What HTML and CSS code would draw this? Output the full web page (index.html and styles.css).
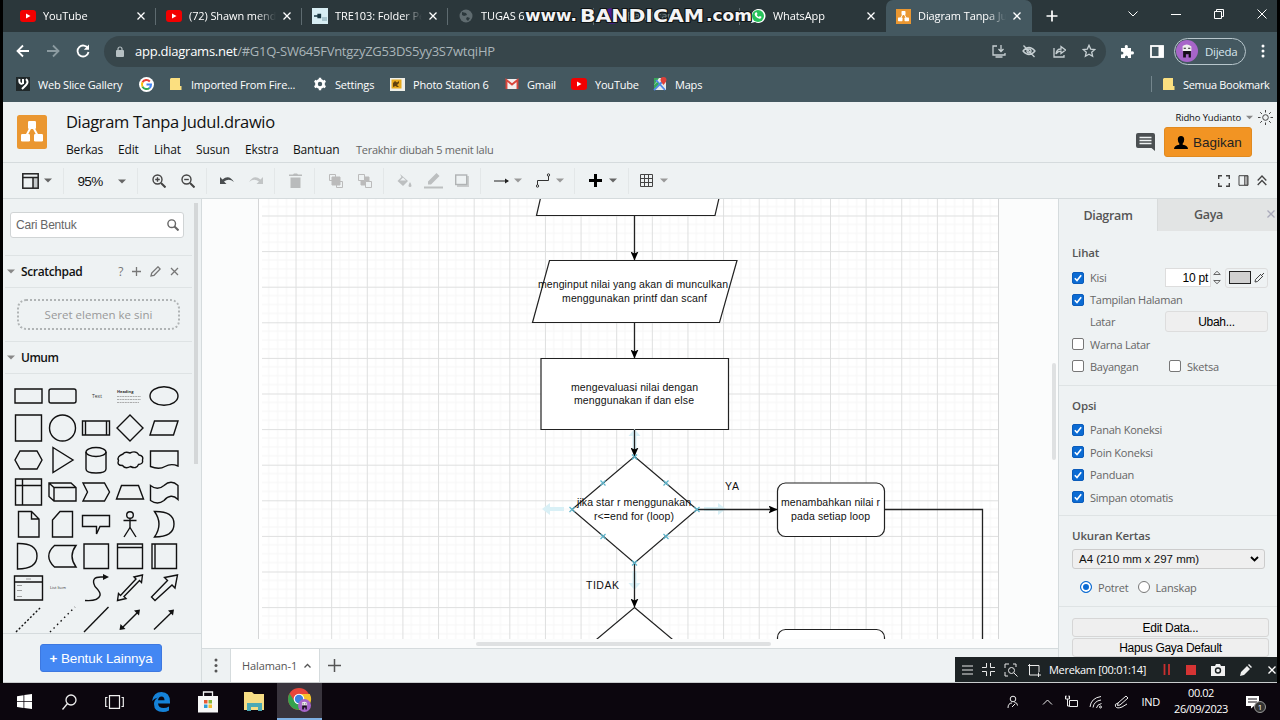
FILE: index.html
```html
<!DOCTYPE html>
<html lang="id">
<head>
    <meta charset="UTF-8">
    <meta name="viewport" content="width=device-width, initial-scale=1.0">
    <title>Diagram Tanpa Judul.drawio</title>
    <link rel="stylesheet" href="styles.css">
</head>
<body>
    <svg class="defs" width="0" height="0">
        <symbol id="close" viewBox="0 0 10 10"><path d="M1.5 1.5l7 7M8.500 1.500l-7 7" fill="none" stroke="currentColor" stroke-width="1.300"/></symbol>
        <symbol id="caret" viewBox="0 0 8 5"><path d="M0 .5h8L4 4.500z" fill="currentColor"/></symbol>
        <symbol id="youtube" viewBox="0 0 16 12"><rect width="16" height="12" rx="3" fill="#f20000"/><path d="M6 3.500v5L10.500 6z" fill="#fff"/></symbol>
        <symbol id="drawio" viewBox="0 0 30 34"><rect width="30" height="34" rx="2.500" fill="#ea9731"/><path d="M15 10L8 23M15 10l7 13" stroke="#fff" stroke-width="2"/><rect x="11" y="6" width="8" height="8" rx="1.300" fill="#fff"/><rect x="4" y="19" width="9" height="7.500" rx="1.300" fill="#fff"/><rect x="17" y="19" width="9" height="7.500" rx="1.300" fill="#fff"/></symbol>
        <symbol id="folder" viewBox="0 0 12 14"><path d="M1 1h9v8h1.500v4H0V2z" fill="#fbdf80"/></symbol>
        <symbol id="avatar" viewBox="0 0 20 20"><circle cx="10" cy="10" r="10" fill="#a765c9"/><path d="M6 5.500q4-3 8 .5v4H6z" fill="#eee"/><path d="M6.500 10h7v6h-2v-3h-2.500v3h-2.500z" fill="#151018"/><path d="M7 7.500h2M11 7.500h2" stroke="#222"/></symbol>
        <symbol id="check" viewBox="0 0 12 12"><rect x=".5" y=".5" width="11" height="11" rx="1.500" fill="#0b6bd3" stroke="#0b5cba"/><path d="M2.800 6.200l2.200 2.300 4.200-5.300" fill="none" stroke="#fff" stroke-width="1.600"/></symbol>
        <symbol id="uncheck" viewBox="0 0 12 12"><rect x=".5" y=".5" width="11" height="11" rx="1.500" fill="#fff" stroke="#777"/></symbol>
    </svg>

    <div class="window">
        <div class="tabs">
            <div class="tab"><svg width="16" height="12"><use href="#youtube"/></svg><span>YouTube</span><svg class="x" width="10" height="10"><use href="#close"/></svg></div>
            <div class="tab"><svg width="16" height="12"><use href="#youtube"/></svg><span>(72) Shawn mendes</span><svg class="x" width="10" height="10"><use href="#close"/></svg></div>
            <div class="tab"><svg width="16" height="16" viewBox="0 0 16 16"><rect width="16" height="16" fill="#d7edf3"/><path d="M2 8h6M6 6.500h2.500v3H6z" stroke="#173541" stroke-width="1.300"/><path d="M10 9h5v4h-5z" fill="#a8c5ce"/></svg><span>TRE103: Folder Pe</span><svg class="x" width="10" height="10"><use href="#close"/></svg></div>
            <div class="tab"><svg width="16" height="16" viewBox="0 0 16 16"><circle cx="8" cy="8" r="6.500" fill="#5f6b6f"/><path d="M4 4l4 1 1 2-3 1-2-1zM9 9l3 1-2 3-2-2z" fill="#2b373b"/></svg><span>TUGAS 6</span></div>
            <div class="tab"><svg width="16" height="16" viewBox="0 0 16 16"><rect width="16" height="16" rx="8" fill="#4b1b91"/></svg><span class="ghost">Bandicam</span></div>
            <div class="tab"><svg width="16" height="16" viewBox="0 0 16 16"><path d="M1 15l1.200-4A7 7 0 1 1 5 14z" fill="#fff"/><circle cx="8" cy="8" r="6" fill="#27c15a"/><path d="M5.500 4.500l1.200-.2.800 1.700-.8 1q.8 1.500 2.200 2l.9-1 1.700.8q0 1.900-2 1.900-4.200-.8-4.900-4.600z" fill="#fff"/></svg><span>WhatsApp</span><svg class="x" width="10" height="10"><use href="#close"/></svg></div>
            <div class="tab active"><svg width="15" height="15" viewBox="0 2 30 30"><use href="#drawio" width="30" height="34"/></svg><span>Diagram Tanpa Judul</span><svg class="x" width="10" height="10"><use href="#close"/></svg></div>
            <svg class="new-tab" width="12" height="12" viewBox="0 0 12 12"><path d="M6 .5v11M.5 6h11" stroke="#fff" stroke-width="1.700"/></svg>
            <div class="controls">
                <svg width="12" height="12" viewBox="0 0 12 12"><path d="M1.500 3.500L6 8l4.500-4.500"/></svg>
                <svg width="12" height="12" viewBox="0 0 12 12"><path d="M1 6.500h10"/></svg>
                <svg width="12" height="12" viewBox="0 0 12 12"><path d="M1.500 3.500h7v7h-7zM3.500 3.500v-2h7v7h-2"/></svg>
                <svg width="12" height="12" viewBox="0 0 12 12"><path d="M1.500 1.500l9 9M10.500 1.500l-9 9"/></svg>
            </div>
        </div>

        <div class="navbar">
            <div class="nav-icons">
                <svg width="14" height="14" viewBox="0 0 14 14"><path d="M13 7H1.500M7 1.500L1.500 7 7 12.500"/></svg>
                <svg class="dim" width="14" height="14" viewBox="0 0 14 14"><path d="M1 7h11.500M7 1.500L12.500 7 7 12.500"/></svg>
                <svg width="14" height="14" viewBox="0 0 14 14"><path d="M12 4.500A5.500 5.500 0 1 0 12.500 8"/><path d="M13 .5v5.300H7.800z" fill="#fff" stroke="none"/></svg>
            </div>
            <div class="address">
                <svg class="lock" width="8" height="11" viewBox="0 0 8 11"><rect y="4" width="8" height="7" rx="1" fill="#b6c0c3"/><path d="M2 4.500V3a2 2 0 0 1 4 0v1.500" fill="none" stroke="#b6c0c3" stroke-width="1.200"/></svg>
                <p><b>app.diagrams.net</b>/#G1Q-SW645FVntgzyZG53DS5yy3S7wtqiHP</p>
                <div class="address-icons">
                    <svg width="14" height="14" viewBox="0 0 14 14"><path d="M5 2H1v9h12V9M9 1v6M6.500 5L9 7.500 11.500 5M3.500 13h7"/></svg>
                    <svg width="14" height="14" viewBox="0 0 14 14"><path d="M1 7q6-7 12 0-6 7-12 0zM1.500 1.500l11 11.500"/><circle cx="7" cy="7" r="2"/></svg>
                    <svg width="14" height="14" viewBox="0 0 14 14"><path d="M2 4v9h10v-2M4 10q.5-5 5-5V2.500L13.500 6 9 9.500V7.200Q6 7 4 10z"/></svg>
                    <svg width="14" height="14" viewBox="0 0 14 14"><path d="M7 1.300l1.700 3.800 4.100.4-3.100 2.700.9 4.100L7 10.200l-3.600 2.100.9-4.100L1.200 5.500l4.100-.4z"/></svg>
                </div>
            </div>
            <svg class="puzzle" width="15" height="15" viewBox="0 0 15 15"><path d="M1 4h4q-.8-3 1.300-3T7.700 4H11v3.500q3-.7 3 1.400T11 10.500V14H8q.3-2.500-1.500-2.500T5 14H1v-3.500q2.500.2 2.500-1.500T1 7.500z" fill="#fff"/></svg>
            <svg class="panel" width="14" height="13" viewBox="0 0 14 13"><rect x="1" y="1" width="12" height="11" fill="none" stroke="#fff" stroke-width="1.800"/><path d="M8.500 1h5v11h-5z" fill="#fff"/></svg>
            <div class="profile"><svg width="22" height="22"><use href="#avatar"/></svg>Dijeda</div>
            <svg width="4" height="14" viewBox="0 0 4 14" fill="#fff"><circle cx="2" cy="2" r="1.500"/><circle cx="2" cy="7" r="1.500"/><circle cx="2" cy="12" r="1.500"/></svg>
        </div>

        <div class="bookmarks">
            <a><svg width="14" height="14" viewBox="0 0 14 14"><rect width="14" height="14" fill="#20282a"/><path d="M3.500 2q-1 5 3 5M10 2q3 3 0 6t-4 4M7 2v5" stroke="#fff" stroke-width="2" fill="none"/></svg>Web Slice Gallery</a>
            <a><svg width="15" height="15" viewBox="0 0 15 15"><circle cx="7.500" cy="7.500" r="7.500" fill="#fff"/><g fill="none" stroke-width="2"><path d="M10.800 4.500A4.600 4.600 0 0 0 3.500 5.300" stroke="#e94335"/><path d="M3.500 5.300a4.600 4.600 0 0 0 0 4.400" stroke="#fbbc05"/><path d="M3.500 9.700a4.600 4.600 0 0 0 7 1.300" stroke="#34a853"/><path d="M10.500 11q1.600-1.300 1.500-3.500H7.500" stroke="#4285f4"/></g></svg></a>
            <a><svg width="12" height="14"><use href="#folder"/></svg>Imported From Fire...</a>
            <a><svg width="14" height="14" viewBox="0 0 14 14"><circle cx="7" cy="7" r="3.600" fill="none" stroke="#fff" stroke-width="2.600"/><path d="M7 .8v12.400M1.600 3.900l10.800 6.200M1.600 10.100l10.800-6.200" stroke="#fff" stroke-width="2.400"/><circle cx="7" cy="7" r="2.200" fill="#445860"/></svg>Settings</a>
            <a><svg width="15" height="13" viewBox="0 0 15 13"><rect width="15" height="13" fill="#efefe7"/><rect x="1.500" y="1.500" width="10" height="9" fill="#e6a91d"/><path d="M3 5l2-2 2 1.500L9 3v2L7 7l2 2H7L5.500 8 3 9z" fill="#61410c"/></svg>Photo Station 6</a>
            <a><svg width="14" height="12" viewBox="0 0 14 12"><rect x="1" y="1" width="12" height="10" fill="#f3eeee"/><path d="M1.500 11V2L7 6.500 12.500 2v9" fill="none" stroke="#d9463c" stroke-width="1.900"/></svg>Gmail</a>
            <a><svg width="16" height="12"><use href="#youtube"/></svg>YouTube</a>
            <a><svg width="14" height="14" viewBox="0 0 14 14"><path d="M1 1h9l3 4v8H1z" fill="#e6e9e8"/><path d="M1 1h5L1 8z" fill="#38a558"/><path d="M1 13l8-8M3 3l9 10" stroke="#4b86e8" stroke-width="1.800"/><path d="M1 8l3-3 2 2-5 5z" fill="#35a85a"/><path d="M10.500 0a3 3 0 0 1 3 3q0 2-3 5-3-3-3-5a3 3 0 0 1 3-3z" fill="#df4038"/></svg>Maps</a>
            <a class="all"><svg width="12" height="14"><use href="#folder"/></svg>Semua Bookmark</a>
        </div>

        <div class="header">
            <svg class="logo" width="30" height="34"><use href="#drawio"/></svg>
            <div class="heading">
                <h1>Diagram Tanpa Judul.drawio</h1>
                <div class="menu"><span>Berkas</span><span>Edit</span><span>Lihat</span><span>Susun</span><span>Ekstra</span><span>Bantuan</span><span class="status">Terakhir diubah 5 menit lalu</span></div>
            </div>
            <div class="account">
                <div class="user">Ridho Yudianto <svg width="7" height="5" color="#888"><use href="#caret"/></svg><svg width="15" height="15" viewBox="0 0 15 15" fill="none" stroke="#444"><circle cx="7.500" cy="7.500" r="2.800"/><path d="M7.500 0v2.500M7.500 12.500V15M0 7.500h2.500M12.500 7.500H15M2.200 2.200L4 4M11 11l1.800 1.800M2.200 12.800L4 11M11 4l1.800-1.800"/></svg></div>
                <div class="share-row">
                    <svg width="19" height="18" viewBox="0 0 19 18"><path d="M2 0h15q2 0 2 2v16l-3.500-3H2q-2 0-2-2V2q0-2 2-2z" fill="#4b5052"/><path d="M3.500 4.500h12M3.500 7.500h12M3.500 10.500h12" stroke="#eef2f3" stroke-width="1.400"/></svg>
                    <button class="share"><svg width="14" height="13" viewBox="0 0 14 13"><path d="M7 0q3.200 0 3.200 3.500 0 2.500-1.500 4v1.200Q14 9.500 14 13H0q0-3.500 5.300-4.300V7.500q-1.500-1.500-1.500-4Q3.800 0 7 0z"/></svg>Bagikan</button>
                </div>
            </div>
        </div>

        <div class="toolbar">
            <div class="group first"><svg width="17" height="16" viewBox="0 0 17 16" fill="none" stroke="#222" stroke-width="1.500"><path d="M11 4.500h5V15h-5z" fill="#c5c9ca" stroke="none"/><rect x=".8" y=".8" width="15.400" height="14.400"/><path d="M1 4.500h15M11 4.500V15"/></svg><svg class="caret" width="8" height="5"><use href="#caret"/></svg></div>
            <div class="group zoom">95%<svg class="caret" width="8" height="5"><use href="#caret"/></svg></div>
            <div class="group gap15">
                <svg width="14" height="14" viewBox="0 0 14 14" fill="none" stroke="#444" stroke-width="1.400"><circle cx="5.500" cy="5.500" r="4.500"/><path d="M9 9l4.500 4.500" stroke-width="2"/><path d="M3.200 5.500h4.600M5.500 3.200v4.600"/></svg>
                <svg width="14" height="14" viewBox="0 0 14 14" fill="none" stroke="#444" stroke-width="1.400"><circle cx="5.500" cy="5.500" r="4.500"/><path d="M9 9l4.500 4.500" stroke-width="2"/><path d="M3.200 5.500h4.600"/></svg>
            </div>
            <div class="group gap15">
                <svg width="14" height="9" viewBox="0 0 14 9"><path d="M0 1v7h6.500L4 5.500Q9 2 14 6 9-2 2.500 3.500z" fill="#4a4e50"/></svg>
                <svg width="14" height="9" viewBox="0 0 14 9"><path d="M14 1v7H7.500L10 5.500Q5 2 0 6 5-2 11.500 3.500z" fill="#c2c5c6"/></svg>
            </div>
            <div class="group"><svg width="13" height="15" viewBox="0 0 13 15" fill="#b9bbbc"><path d="M0 1.500h4L5 .5h3l1 1h4V3H0zM1.500 4.500h10V15h-10z"/></svg></div>
            <div class="group gap15">
                <svg width="14" height="14" viewBox="0 0 14 14" fill="none" stroke="#bbb"><path d="M.5.500h6v6h-6zM7.500 7.500h6v6h-6z"/><path d="M3 3h8v8H3z" fill="#bbb"/></svg>
                <svg width="14" height="14" viewBox="0 0 14 14" fill="none" stroke="#bbb"><path d="M3 3h8v8H3z" fill="#bbb"/><path d="M.5.500h6v6h-6zM7.500 7.500h6v6h-6z" fill="#eef2f3"/></svg>
            </div>
            <div class="group gap13">
                <svg width="15" height="14" viewBox="0 0 15 14"><path d="M3 0l8 7-5 5-5.500-5 4-4zM13 8q3 5 0 5t0-5z" fill="#bcbfc0"/><path d="M3 6.500h6L6 3.500z" fill="#eef2f3"/></svg>
                <svg width="19" height="17" viewBox="0 0 19 17" fill="#bcbfc0"><path d="M4 9.500L12.500 1l3 3L7 12.500H4zM0 14.500h19v2H0z"/></svg>
                <svg width="14" height="13" viewBox="0 0 14 13"><path d="M2 2h12v11H2z" fill="#c9cbcc"/><rect x=".7" y="1" width="11" height="9.500" fill="#eef2f3" stroke="#b0b3b4" stroke-width="1.400"/></svg>
            </div>
            <div class="group line-tools">
                <svg width="15" height="6" viewBox="0 0 15 6"><path d="M0 3h14" stroke="#222"/><path d="M11 .5L15 3l-4 2.500z" fill="#222"/></svg><svg class="caret light" width="8" height="5"><use href="#caret"/></svg>
                <svg class="elbow" width="15" height="15" viewBox="0 0 15 15" fill="none" stroke="#333"><path d="M1.500 12V7.500h11V3"/><circle cx="1.500" cy="13" r="1.200"/><circle cx="12.500" cy="2" r="1.200"/></svg><svg class="caret light" width="8" height="5"><use href="#caret"/></svg>
            </div>
            <div class="group gap7"><svg width="13" height="13" viewBox="0 0 13 13"><path d="M6.500 0v13M0 6.500h13" stroke="#000" stroke-width="3"/></svg><svg class="caret" width="8" height="5"><use href="#caret"/></svg></div>
            <div class="group table"><svg width="13" height="13" viewBox="0 0 13 13" fill="none" stroke="#444"><path d="M.5.500h12v12H.500zM4.500 0v13M8.500 0v13M0 4.500h13M0 8.500h13"/></svg><svg class="caret light" width="8" height="5"><use href="#caret"/></svg></div>
            <div class="group view">
                <svg width="12" height="12" viewBox="0 0 12 12"><path d="M.7 4V.7H4M8 .7h3.300V4M11.300 8v3.300H8M4 11.300H.7V8" stroke-width="1.400"/></svg>
                <svg width="11" height="11" viewBox="0 0 11 11"><path d="M1 .7h9v9.600H1z"/><path d="M6.500 1H9.500v9h-3z" fill="#aaa" stroke-width=".7"/></svg>
                <svg width="10" height="11" viewBox="0 0 10 11"><path d="M.7 5.500L5 1l4.300 4.500M.7 10L5 5.500 9.300 10" stroke-width="1.300"/></svg>
            </div>
        </div>

        <div class="workspace">
            <div class="sidebar">
                <div class="sidebar-scroll">
                    <div class="search">Cari Bentuk<svg width="12" height="12" viewBox="0 0 12 12" fill="none" stroke="#666" stroke-width="1.400"><circle cx="4.700" cy="4.700" r="3.800"/><path d="M7.500 7.500l4 4" stroke-width="2"/></svg></div>
                    <div class="section"><svg width="8" height="5" color="#888"><use href="#caret"/></svg><b>Scratchpad</b><span class="tools"><span>?</span><svg width="9" height="9" viewBox="0 0 9 9"><path d="M4.500 0v9M0 4.500h9"/></svg><svg width="11" height="11" viewBox="0 0 11 11"><path d="M1 10l.7-3L8 .8 10.200 3 4 9.300z"/></svg><svg width="9" height="9" viewBox="0 0 9 9"><path d="M1 1l7 7M8 1L1 8"/></svg></span></div>
                    <div class="drop">Seret elemen ke sini</div>
                    <div class="section"><svg width="8" height="5" color="#888"><use href="#caret"/></svg><b class="wide">Umum</b></div>
                    <div class="shapes">
                        <svg viewBox="0 0 34 32"><path d="M3 9h27v14H3z"/></svg>
                        <svg viewBox="0 0 34 32"><rect x="3" y="9" width="27" height="14" rx="2"/></svg>
                        <svg viewBox="0 0 34 32"><text x="12" y="18" font-size="5">Text</text></svg>
                        <svg viewBox="0 0 34 32"><text x="3" y="13" font-size="4" font-weight="bold">Heading</text><path d="M3 16.500h24M3 19.500h24M3 22.500h22" stroke="#999" stroke-width=".8" stroke-dasharray="2 .6"/></svg>
                        <svg viewBox="0 0 34 32"><ellipse cx="16" cy="16" rx="14" ry="9.300"/></svg>

                        <svg viewBox="0 0 34 32"><path d="M3.500 3h26v26h-26z"/></svg>
                        <svg viewBox="0 0 34 32"><circle cx="16.500" cy="16" r="13"/></svg>
                        <svg viewBox="0 0 34 32"><path d="M2.500 9h27v14h-27zM5.500 9v14M26.500 9v14"/></svg>
                        <svg viewBox="0 0 34 32"><path d="M16 3l13 13-13 13L3 16z"/></svg>
                        <svg viewBox="0 0 34 32"><path d="M6.500 9h23.500l-4.500 14H2z"/></svg>

                        <svg viewBox="0 0 34 32"><path d="M8 7h17l5 9-5 9H8l-5-9z"/></svg>
                        <svg viewBox="0 0 34 32"><path d="M7 3.500L27 16 7 28.500z"/></svg>
                        <svg viewBox="0 0 34 32"><ellipse cx="16" cy="8" rx="10" ry="4.500"/><path d="M6 8v17q0 4 10 4t10-4V8"/></svg>
                        <svg viewBox="0 0 34 32"><path d="M9 10q2-3 7-1 6-3 9 2 5 1 3.500 5 1 4-4 4.500-2 5-8 2-5 3-8-1-6 0-4-5-2-4 4.500-6.500z"/></svg>
                        <svg viewBox="0 0 34 32"><path d="M2.500 7H30v15q-7-3-13 .5t-14.500 0z"/></svg>

                        <svg viewBox="0 0 34 32"><path d="M3.500 3h26v26h-26zM10.500 3v26M3.500 9.500h26"/></svg>
                        <svg viewBox="0 0 34 32"><path d="M3 7h22l5 4.500V25H8l-5-4.500zM3 7l5 4.500h22M8 11.500V25"/></svg>
                        <svg viewBox="0 0 34 32"><path d="M3 7h21.500l5 9-5 9H3l4.500-9z"/></svg>
                        <svg viewBox="0 0 34 32"><path d="M7.500 9.500h17l5 13.500h-27z"/></svg>
                        <svg viewBox="0 0 34 32"><path d="M2.500 9.500q7 5.500 13.500 0 7-6.500 14 0v14q-7-7-14 1-6.500 5-13.500 0z"/></svg>

                        <svg viewBox="0 0 34 32"><path d="M6.500 3.500h13L27 11v18H6.500zM19.500 3.500V11H27"/></svg>
                        <svg viewBox="0 0 34 32"><path d="M14 3.500h12.500V29h-20V12z"/></svg>
                        <svg viewBox="0 0 34 32"><path d="M2.500 7.500h27v11H20l-3.500 7.500v-7.500h-14z"/></svg>
                        <svg viewBox="0 0 34 32"><circle cx="16" cy="7" r="3.300"/><path d="M16 10.500v9M9.500 12.500h13M16 19.500l-6 9.500M16 19.500l6 9.500"/></svg>
                        <svg viewBox="0 0 34 32"><path d="M6.500 3.500Q26 3 26 16T6.500 29q9-13 0-25.500z"/></svg>

                        <svg viewBox="0 0 34 32"><path d="M5.500 3.500Q25 3 25 16T5.500 29z"/></svg>
                        <svg viewBox="0 0 34 32"><path d="M8.500 5.500H30q-8 10.500 0 21.500H8.500Q-3 16 8.500 5.500z"/></svg>
                        <svg viewBox="0 0 34 32"><path d="M4 4h24.500v24.500H4z"/></svg>
                        <svg viewBox="0 0 34 32"><path d="M3.500 4h25v24.500h-25zM3.500 7.500h25"/></svg>
                        <svg viewBox="0 0 34 32"><path d="M4 4h24.500v24.500H4zM7 4v24.500"/></svg>

                        <svg viewBox="0 0 34 32"><path d="M2.500 4h28v24h-28zM2.500 10h28"/><path d="M14 7h5M5 13.500h5M5 18.500h5M5 24.500h5" stroke="#888" stroke-width=".8"/></svg>
                        <svg viewBox="0 0 34 32"><text x="4" y="17" font-size="4" fill="#777">List Item</text></svg>
                        <svg viewBox="0 0 34 32"><path d="M5 28.500q13 1 15-5 1-3-5-9-5-10 7-9.500h2"/><path d="M23 2l6 3-6 3z" fill="#111" stroke="none"/></svg>
                        <svg viewBox="0 0 34 32"><path d="M3.500 28.500l1-7 2 2L22 7l-2-2 8.500-2-1 7.500-2-2L10 24.500l2 2z"/></svg>
                        <svg viewBox="0 0 34 32"><path d="M3.500 25L19.500 8.500l-3-3L29.500 3 27 16l-3-3L7 28.500z"/></svg>

                        <svg viewBox="0 0 34 32"><path d="M4 28L29 3" stroke-dasharray="2 2"/></svg>
                        <svg viewBox="0 0 34 32"><path d="M4 28L29 3" stroke-dasharray="1.500 3.500"/></svg>
                        <svg viewBox="0 0 34 32"><path d="M4 28L28.500 3"/></svg>
                        <svg viewBox="0 0 34 32"><path d="M8 24L24 8"/><path d="M5.500 26l1-6 5 5zM26 5.500l-6 1 5 5z" fill="#111" stroke="none"/></svg>
                        <svg viewBox="0 0 34 32"><path d="M6 25.500L24 8"/><path d="M26 5.500l-6 1 5 5z" fill="#111" stroke="none"/></svg>
                    </div>
                </div>
                <div class="more"><button><b>+</b> Bentuk Lainnya</button></div>
            </div>

            <div class="editor">
                <div class="canvas">
                    <svg width="856" height="440" viewBox="202 199 856 440">
                        <defs>
                            <pattern id="grid" x="259.900" y="215.500" width="35.630" height="35.600" patternUnits="userSpaceOnUse">
                                <path d="M8.900 0v36M17.800 0v36M26.700 0v36M0 8.900h36M0 17.800h36M0 26.700h36" stroke="#f6f6f6"/>
                                <path d="M0 0v36M0 0h36" stroke="#dedfdf" stroke-width="2"/>
                            </pattern>
                            <marker id="arrow" viewBox="0 0 9 8" refX="8.500" refY="4" markerWidth="9" markerHeight="8" markerUnits="userSpaceOnUse" orient="auto"><path d="M0 0l9 4-9 4 2-4z"/></marker>
                            <g id="point"><path d="M-2.500-2.500l5 5M2.500-2.500l-5 5" stroke="#5db4cb" stroke-width="1.200"/></g>
                        </defs>
                        <path d="M258.500 190h740v460h-740z" fill="#fff" stroke="#d5d6d7"/>
                        <path d="M262 199h736v440H262z" fill="url(#grid)"/>
                        <g fill="#fff" stroke="#222" stroke-width="1.200">
                            <path d="M541 196l-4.500 19.500h178.500l4.500-19.500z"/>
                            <path d="M549.500 260.500h187.500l-17.500 62H532.500z"/>
                            <path d="M541 358.500h187.500v71H541z"/>
                            <path d="M634.500 456.500L697 509.500 634.500 563 572 509.500z"/>
                            <rect x="777.500" y="483" width="107" height="53.500" rx="8"/>
                            <path d="M634.500 607.500L697 660H572z"/>
                            <rect x="777.500" y="629.500" width="107" height="53" rx="8"/>
                        </g>
                        <g fill="#d9f0f6"><path d="M542 509l8-6v4h14v4h-14v4zM726 509l-8-6v4h-14v4h14v4zM634.500 429l6 7h-4v13h-4v-13h-4zM634.500 590l6-7h-4v-12h-4v12h-4z"/></g>
                        <g fill="none" stroke="#222" stroke-width="1.300">
                            <path d="M634.500 216v44" marker-end="url(#arrow)"/>
                            <path d="M634.500 323v35" marker-end="url(#arrow)"/>
                            <path d="M634.500 430v26" marker-end="url(#arrow)"/>
                            <path d="M634.500 563v44" marker-end="url(#arrow)"/>
                            <path d="M697 509.500h80" marker-end="url(#arrow)"/>
                            <path d="M885 509.500h97.500V640"/>
                        </g>
                        <use href="#point" x="634.500" y="457"/><use href="#point" x="603" y="483"/><use href="#point" x="666" y="483"/><use href="#point" x="572" y="509.500"/><use href="#point" x="697" y="509.500"/><use href="#point" x="603" y="536.500"/><use href="#point" x="666" y="536.500"/><use href="#point" x="634.500" y="563"/>
                        <g class="labels">
                            <text x="538" y="288" textLength="190">menginput nilai yang akan di munculkan</text>
                            <text x="562" y="302" textLength="145">menggunakan printf dan scanf</text>
                            <text x="571" y="391" textLength="127">mengevaluasi nilai dengan</text>
                            <text x="574" y="404" textLength="120">menggunakan if dan else</text>
                            <text x="577" y="506" textLength="114">jika star r menggunakan</text>
                            <text x="594" y="519.500" textLength="80">r&lt;=end for (loop)</text>
                            <text x="781" y="506" textLength="99">menambahkan nilai r</text>
                            <text x="791" y="519.500" textLength="79">pada setiap loop</text>
                            <text x="725" y="490" textLength="14">YA</text>
                            <text x="586" y="589" textLength="33">TIDAK</text>
                        </g>
                    </svg>
                    <i class="scroll-y"></i>
                    <i class="scroll-x"></i>
                </div>
                <div class="pages">
                    <svg width="4" height="16" viewBox="0 0 4 16" fill="#555"><circle cx="2" cy="2" r="1.500"/><circle cx="2" cy="7.500" r="1.500"/><circle cx="2" cy="13" r="1.500"/></svg>
                    <div class="page">Halaman-1<svg width="7" height="5" viewBox="0 0 7 5"><path d="M.5 4.500l3-3 3 3" fill="none" stroke="#555" stroke-width="1.300"/></svg></div>
                    <svg width="13" height="13" viewBox="0 0 13 13"><path d="M6.500 0v13M0 6.500h13" stroke="#555" stroke-width="1.500"/></svg>
                </div>
            </div>

            <div class="format">
                <div class="format-tabs"><b>Diagram</b><b class="off">Gaya<svg width="10" height="10"><use href="#close"/></svg></b></div>
                <div class="block view-block">
                    <h2>Lihat</h2>
                    <div class="row"><svg width="12" height="12"><use href="#check"/></svg><span>Kisi</span>
                        <div class="stepper">10 pt</div>
                        <svg class="arrows" width="8" height="15" viewBox="0 0 8 15" fill="none" stroke="#666"><path d="M.7 4.500L4 1.300 7.300 4.500zM.7 10.500L4 13.700 7.300 10.500z"/></svg>
                        <div class="color"><i></i><svg width="11" height="11" viewBox="0 0 11 11" fill="none" stroke="#444"><path d="M1 10l.5-2.500 5-5 2 2-5 5zM6 2l3 3M8 3l2-2"/></svg></div>
                    </div>
                    <div class="row"><svg width="12" height="12"><use href="#check"/></svg><span>Tampilan Halaman</span></div>
                    <div class="row"><span class="indent">Latar</span><button class="change">Ubah...</button></div>
                    <div class="row"><svg width="12" height="12"><use href="#uncheck"/></svg><span>Warna Latar</span></div>
                    <div class="row"><svg width="12" height="12"><use href="#uncheck"/></svg><span class="half">Bayangan</span><svg width="12" height="12"><use href="#uncheck"/></svg><span>Sketsa</span></div>
                </div>
                <div class="block options">
                    <h2>Opsi</h2>
                    <div class="row"><svg width="12" height="12"><use href="#check"/></svg><span>Panah Koneksi</span></div>
                    <div class="row"><svg width="12" height="12"><use href="#check"/></svg><span>Poin Koneksi</span></div>
                    <div class="row"><svg width="12" height="12"><use href="#check"/></svg><span>Panduan</span></div>
                    <div class="row"><svg width="12" height="12"><use href="#check"/></svg><span>Simpan otomatis</span></div>
                </div>
                <div class="block paper">
                    <h2>Ukuran Kertas</h2>
                    <div class="select">A4 (210 mm x 297 mm)<svg width="9" height="6" viewBox="0 0 9 6"><path d="M1 1l3.500 3.500L8 1" fill="none" stroke="#000" stroke-width="1.900"/></svg></div>
                    <div class="radios"><i class="radio on"></i><span>Potret</span><i class="radio"></i><span>Lanskap</span></div>
                </div>
                <div class="actions"><button>Edit Data...</button><button>Hapus Gaya Default</button></div>
            </div>
        </div>
    </div>

    <div class="taskbar">
        <div><svg width="15" height="15" viewBox="0 0 15 15" fill="#fff"><path d="M0 2.200l6.500-1v6H0zM7.300 1.100L15 0v7.200H7.300zM0 8h6.500v6L0 13zM7.300 8H15v7l-7.700-1.100z"/></svg></div>
        <div><svg width="15" height="16" viewBox="0 0 15 16" fill="none" stroke="#eee" stroke-width="1.300"><circle cx="9" cy="6" r="5"/><path d="M5.500 9.500L.5 15.500"/></svg></div>
        <div><svg width="19" height="14" viewBox="0 0 19 14" fill="none" stroke="#eee" stroke-width="1.200"><path d="M4.500.7h10v12.600h-10zM2.500 2.500H.7v9h1.800M16.500 2.500h1.800v9h-1.800"/></svg></div>
        <div><svg width="20" height="20" viewBox="0 0 20 20"><path d="M1 9Q2.500 0 10.500 0 19 0 19 10v1.500H7q.5 4.500 5.500 4.500 3 0 5.500-1.500v4Q15 20 12 20q-9 0-9-8 0-4.500 4-6.500Q3.500 6 1 9zM7 8.300h6.500q0-3.800-3-3.800T7 8.300z" fill="#1582d8"/></svg></div>
        <div><svg width="22" height="22" viewBox="0 0 22 22"><path d="M6.500 6V1h9v5" fill="none" stroke="#f5f5f5" stroke-width="1.300"/><path d="M1 5h20v16.500H1z" fill="#f7f7f7"/><path d="M7 9h3.500v3.500H7z" fill="#e85c35"/><path d="M11.500 9H15v3.500h-3.500z" fill="#85b83b"/><path d="M7 13.500h3.500V17H7z" fill="#2e9ed8"/><path d="M11.500 13.500H15V17h-3.500z" fill="#f2bc32"/></svg></div>
        <div><svg width="21" height="19" viewBox="0 0 21 19"><path d="M0 0h8l2 2h10v16H0z" fill="#f5dc84"/><path d="M3 19v-8h15v8h-4v-4H7v4z" fill="#4ba9b5"/></svg></div>
        <div class="running"><svg width="24" height="25" viewBox="0 0 24 25"><circle cx="11" cy="11" r="11" fill="#e8463b"/><path d="M1.500 5.500A11 11 0 0 0 11 22l4-7-8-1z" fill="#34a24d"/><path d="M11 6h10.800A11 11 0 0 1 11 22l5-9z" fill="#f5c32c"/><circle cx="11" cy="11" r="5.300" fill="#fff"/><circle cx="11" cy="11" r="4.200" fill="#3d80df"/><use href="#avatar" x="10" y="11" width="13" height="13"/></svg></div>
        <div class="tray">
            <svg width="14" height="14" viewBox="0 0 14 14"><circle cx="7" cy="4" r="2.800"/><path d="M2 13q0-5 4-5M8.500 7.500q3 0 3 3M6 12l3-3"/></svg>
            <svg width="11" height="8" viewBox="0 0 11 8"><path d="M1 6.500L5.500 2 10 6.500"/></svg>
            <svg width="14" height="14" viewBox="0 0 14 14"><path d="M5.500 5.500h8v6h-8zM1.500 1v3h4V1M3.500 4v7h2M2 .5v2M5 .5v2"/></svg>
            <svg width="14" height="14" viewBox="0 0 14 14"><path d="M1 12Q2 3 12 1.500M4 12.500q1-6.500 8-7.500M7.500 13q.5-3.500 5-4.500"/><circle cx="11.500" cy="12" r="1"/></svg>
            <svg width="15" height="14" viewBox="0 0 15 14"><path d="M4 8l8-7 2 2-8 7-2.500.5zM4 8q-4 1-2.500 3.500T8 12l5-3"/></svg>
            <span class="lang">IND</span>
            <span class="clock">00.02<br>26/09/2023</span>
            <div class="notif"><svg width="15" height="14" viewBox="0 0 15 14"><path d="M1 1h13v10H9l-3 2.500V11H1z" fill="#fff"/><path d="M3 4h9M3 7h9" stroke="#171018"/></svg><span>1</span></div>
        </div>
    </div>

    <div class="recorder">
        <svg width="11" height="10" viewBox="0 0 11 10"><path d="M0 1h11M0 5h11M0 9h11"/></svg>
        <svg width="13" height="13" viewBox="0 0 13 13"><path d="M4.500 0v4.500H0M8.500 0v4.500H13M4.500 13V8.500H0M8.500 13V8.500H13"/></svg>
        <svg width="14" height="14" viewBox="0 0 14 14"><path d="M1 5V1h4M9 1h3v3M1 9v4h3"/><circle cx="7.500" cy="7.500" r="3"/><path d="M10 10l3.500 3.500"/></svg>
        <svg width="14" height="14" viewBox="0 0 14 14"><path d="M1 2.500h11V9M2.500 1v11H9M9 12h5M11.500 9.500v4.500"/></svg>
        <span>Merekam [00:01:14]</span>
        <svg width="8" height="11" viewBox="0 0 8 11"><path d="M1.500 0v11M6 0v11" stroke="#c92f2f" stroke-width="1.800"/></svg>
        <svg width="10" height="10"><rect width="10" height="10" fill="#d63434" stroke="none"/></svg>
        <svg width="14" height="12" viewBox="0 0 14 12"><path d="M0 2h4l1-2h4l1 2h4v10H0z" fill="#f0f0f0" stroke="none"/><circle cx="7" cy="6.500" r="2.500" stroke="#1d2325" stroke-width="1.400"/></svg>
        <svg width="12" height="12" viewBox="0 0 12 12"><path d="M0 12l1-4 6-6 3 3-6 6zM8 1l1-1 3 3-1 1z" fill="#f0f0f0" stroke="none"/></svg>
        <svg width="10" height="10"><use href="#close"/></svg>
    </div>

    <svg class="watermark" width="236" height="22" viewBox="0 0 236 22">
        <text x="3" y="17" font-size="15" textLength="52" lengthAdjust="spacingAndGlyphs">www.</text>
        <text x="58" y="17.500" font-size="17.500" textLength="124" lengthAdjust="spacingAndGlyphs">BANDICAM</text>
        <text x="184" y="17" font-size="15" textLength="46" lengthAdjust="spacingAndGlyphs">.com</text>
    </svg>
</body>
</html>
```
FILE: styles.css
```css
* {
    box-sizing: border-box;
}
body {
    margin: 0;
    width: 1280px;
    height: 720px;
    overflow: hidden;
    position: relative;
    background: #000;
    font-family: "Open Sans", "Noto Sans", sans-serif;
    font-size: 11px;
    letter-spacing: -0.1px;
    color: #111;
}
svg {
    display: block;
    flex: none;
}
.defs {
    position: absolute;
}
h1, h2, p {
    margin: 0;
}
button {
    font-family: "Liberation Sans", Arial, sans-serif;
    padding: 0;
}
.window {
    margin: 0 3px;
    height: 683px;
    display: flex;
    flex-direction: column;
    background: #eef2f3;
    border-bottom: 1px solid #c9cccd;
}

/* browser */
.tabs {
    height: 32px;
    display: flex;
    align-items: center;
    padding-left: 7px;
    background: #2b373b;
    color: #fff;
}
.tab {
    width: 146px;
    height: 32px;
    padding: 0 10px 0 10px;
    display: flex;
    align-items: center;
    position: relative;
}
.tab::after {
    content: "";
    position: absolute;
    right: 0;
    top: 8px;
    height: 17px;
    border-right: 1px solid #5e6b70;
}
.tab span {
    margin-left: 7px;
    margin-top: -1px;
    flex: 1;
    overflow: hidden;
    white-space: nowrap;
    -webkit-mask-image: linear-gradient(90deg, #000 78%, transparent);
    mask-image: linear-gradient(90deg, #000 78%, transparent);
}
.tab .ghost {
    color: #77858a;
}
.tab .x {
    margin-left: 6px;
}
.tab.active {
    background: #445860;
    border-radius: 7px 7px 0 0;
}
.tab.active::after, .tab:nth-child(6)::after {
    display: none;
}
.new-tab {
    margin-left: 14px;
}
.controls {
    margin-left: auto;
    padding-right: 9px;
    padding-bottom: 5px;
    display: flex;
    gap: 31px;
    fill: none;
    stroke: #fff;
}
.navbar {
    height: 38px;
    display: flex;
    align-items: center;
    padding: 0 12px 0 13px;
    background: #445860;
}
.nav-icons {
    width: 88px;
    display: flex;
    gap: 16px;
    fill: none;
    stroke: #fff;
    stroke-width: 1.8;
}
.nav-icons .dim {
    stroke: #8c9ba1;
}
.address {
    width: 1002px;
    height: 31px;
    display: flex;
    align-items: center;
    padding: 0 10px 0 12px;
    border-radius: 16px;
    background: #37464b;
}
.address p {
    margin-left: 11px;
    font-size: 13px;
    letter-spacing: -0.25px;
    color: #aab5b9;
}
.address b {
    font-weight: normal;
    color: #fff;
}
.address-icons {
    margin-left: auto;
    display: flex;
    gap: 16px;
    fill: none;
    stroke: #c7d0d3;
    stroke-width: 1.3;
}
.puzzle {
    margin-left: 14px;
}
.panel {
    margin: 0 10px 0 15px;
}
.profile {
    width: 72px;
    height: 27px;
    display: flex;
    align-items: center;
    gap: 7px;
    margin-right: 15px;
    padding-left: 1px;
    border: 1px solid #b8c6cc;
    border-radius: 14px;
    color: #d8e7ee;
    font-size: 11.5px;
    letter-spacing: -0.3px;
}
.bookmarks {
    height: 32px;
    display: grid;
    grid-template-columns: 123px 31px 143px 77px 115px 66px 82px 1fr 126px;
    align-items: center;
    padding: 0 0 4px 13px;
    background: #445860;
    color: #fff;
}
.bookmarks a {
    display: flex;
    align-items: center;
    gap: 8px;
    white-space: nowrap;
    letter-spacing: -0.2px;
}
.bookmarks a:nth-child(3) {
    gap: 9px;
}
.bookmarks .all {
    height: 16px;
    padding-left: 11px;
    border-left: 1px solid #74868d;
    letter-spacing: -0.3px;
}

/* app header */
.header {
    height: 61px;
    display: flex;
    border-bottom: 1px solid #d5dbdd;
    padding-left: 14px;
}
.logo {
    margin-top: 13px;
}
.heading {
    margin-left: 19px;
}
h1 {
    margin-top: 8px;
    font-size: 16.5px;
    line-height: 24px;
    font-weight: normal;
    letter-spacing: -0.35px;
}
.menu {
    display: grid;
    grid-template-columns: 52px 36px 42px 49px 48px 63px auto;
    margin-top: 6px;
    font-size: 12px;
    line-height: 20px;
    letter-spacing: -0.15px;
}
.menu .status {
    color: #666;
    font-size: 11px;
    letter-spacing: -0.25px;
    white-space: nowrap;
}
.account {
    width: 141px;
    margin-left: auto;
    padding-top: 6px;
}
.user {
    display: flex;
    align-items: center;
    justify-content: flex-end;
    gap: 5px;
    padding-right: 4px;
    height: 19px;
    font-size: 9.5px;
    letter-spacing: -0.15px;
}
.share-row {
    display: flex;
    align-items: center;
    gap: 9px;
}
.share {
    width: 88px;
    height: 30px;
    display: flex;
    align-items: center;
    justify-content: center;
    gap: 5px;
    border: 1px solid #e08a20;
    border-radius: 3px;
    background: #f29423;
    font-size: 13.5px;
    color: #222;
}
.toolbar {
    height: 36px;
    display: grid;
    grid-template-columns: 61px 74px 69px 68px 40px 69px 97px 94px 54px 1fr 60px;
    align-items: center;
    border-bottom: 1px solid #d5dbdd;
}
.group {
    height: 26px;
    display: flex;
    align-items: center;
    justify-content: center;
    border-right: 1px solid #e3e7e8;
    padding-left: 2px;
}
.group.first {
    gap: 5px;
    padding-left: 7px;
}
.zoom {
    gap: 15px;
    font-family: "Liberation Sans", Arial, sans-serif;
    font-size: 13.5px;
    letter-spacing: -0.6px;
    padding-top: 2px;
}
.caret {
    color: #666;
}
.caret.light {
    color: #999;
}
.gap15 {
    gap: 15px;
}
.gap13 {
    gap: 12px;
}
.gap7 {
    gap: 7px;
}
.line-tools {
    gap: 5px;
}
.elbow {
    margin-left: 9px;
}
.group.table {
    justify-content: flex-start;
    padding-left: 11px;
    gap: 7px;
    border: 0;
}
.group.view {
    justify-content: flex-end;
    padding-right: 10px;
    gap: 8px;
    border: 0;
    fill: none;
    stroke: #444;
}

/* workspace */
.workspace {
    flex: 1;
    min-height: 0;
    display: flex;
}
.sidebar {
    width: 199px;
    display: flex;
    flex-direction: column;
    border-right: 1px solid #d5dbdd;
}
.sidebar-scroll {
    height: 434px;
    overflow: hidden;
    padding-top: 13px;
    position: relative;
}
.sidebar-scroll::after {
    content: "";
    position: absolute;
    top: 4px;
    right: 3px;
    width: 4px;
    height: 261px;
    background: #d4d7d8;
}
.search {
    width: 174px;
    height: 26px;
    margin: 0 0 17px 7px;
    padding: 0 4px 0 5px;
    display: flex;
    align-items: center;
    justify-content: space-between;
    background: #fff;
    border: 1px solid #d0d4d5;
    border-radius: 3px;
    font-family: "Liberation Sans", Arial, sans-serif;
    font-size: 12px;
    letter-spacing: -0.2px;
    color: #666;
}
.section {
    width: 187px;
    height: 33px;
    margin-left: 2px;
    padding-left: 2px;
    display: flex;
    align-items: center;
    gap: 6px;
    border-top: 1px solid #dee3e4;
    border-bottom: 1px solid #dee3e4;
    font-size: 12px;
    letter-spacing: -0.35px;
}
.section b {
    font-weight: 600;
}
.section .wide {
    letter-spacing: -0.5px;
}
.tools {
    margin-left: auto;
    padding-right: 13px;
    display: flex;
    align-items: center;
    gap: 9px;
    fill: none;
    stroke: #777;
    stroke-width: 1.3;
    color: #777;
}
.drop {
    width: 163px;
    height: 31px;
    margin: 11px 0 11px 14px;
    border: 2px dotted #b0b4b5;
    border-radius: 9px;
    text-align: center;
    line-height: 28px;
    font-size: 11.5px;
    letter-spacing: 0;
    color: #999;
}
.shapes {
    display: grid;
    grid-template-columns: repeat(5, 34px);
    grid-auto-rows: 32px;
    margin: 6px 0 0 9px;
    fill: none;
    stroke: #111;
    stroke-width: 1.4;
}
.shapes text {
    fill: #333;
    stroke: none;
    letter-spacing: 0;
}
.more {
    flex: 1;
    border-top: 1px solid #d5dbdd;
    padding: 10px 0 0 37px;
}
.more button {
    width: 122px;
    height: 28px;
    border: 1px solid #3d78e0;
    border-radius: 3px;
    background: #4387f3;
    color: #fff;
    font-size: 13.5px;
    letter-spacing: -0.1px;
}
.editor {
    width: 856px;
    display: flex;
    flex-direction: column;
}
.canvas {
    height: 449px;
    position: relative;
    background: #fbfcfc;
}
.scroll-y, .scroll-x {
    position: absolute;
    background: #dfe1e2;
    border-radius: 2px;
}
.scroll-y {
    left: 850px;
    top: 164px;
    width: 4px;
    height: 97px;
}
.scroll-x {
    left: 274px;
    top: 443px;
    width: 295px;
    height: 4px;
}
.labels {
    font-family: "Liberation Sans", Arial, sans-serif;
    font-size: 10.5px;
    fill: #111;
    letter-spacing: 0;
}
.pages {
    flex: 1;
    display: flex;
    align-items: center;
    border-top: 1px solid #d5dbdd;
    padding-left: 12px;
}
.page {
    width: 90px;
    height: 100%;
    display: flex;
    align-items: center;
    gap: 7px;
    margin: 0 8px 0 12px;
    padding-left: 11px;
    background: #fff;
    border: solid #d5dbdd;
    border-width: 0 1px;
    color: #555;
}

/* format panel */
.format {
    flex: 1;
    min-width: 0;
    border-left: 1px solid #d5dbdd;
    overflow: hidden;
    color: #666;
}
.format-tabs {
    height: 32px;
    display: flex;
    font-size: 12.5px;
    letter-spacing: -0.35px;
}
.format-tabs b {
    width: 98px;
    text-align: center;
    line-height: 34px;
    color: #555;
    font-weight: 600;
}
.format-tabs .off {
    width: 120px;
    height: 32px;
    line-height: 32px;
    padding-right: 18px;
    background: #e2e4e4;
    border-left: 1px solid #d8dbdb;
    position: relative;
}
.off svg {
    position: absolute;
    right: 1px;
    top: 10px;
    color: #aab;
}
.block {
    padding-left: 13px;
    border-bottom: 1px solid #dee3e4;
}
h2 {
    font-size: 11.5px;
    font-weight: 600;
    line-height: 20px;
    letter-spacing: -0.15px;
    color: #555;
}
.row {
    height: 22.5px;
    display: flex;
    align-items: center;
    gap: 6px;
    letter-spacing: -0.25px;
}
.view-block {
    height: 155px;
    padding-top: 12px;
}
.view-block h2 {
    margin-bottom: 3.5px;
}
.view-block .row {
    height: 22.2px;
}
.half {
    width: 73px;
}
.stepper {
    width: 46px;
    height: 19px;
    margin-left: auto;
    background: #fff;
    border: 1px solid #ddd;
    text-align: right;
    padding-right: 2px;
    line-height: 18px;
    font-family: "Liberation Sans", Arial, sans-serif;
    font-size: 12px;
    color: #000;
}
.arrows {
    margin: 0 -2px 0 -4px;
}
.color {
    width: 43px;
    height: 20px;
    display: flex;
    align-items: center;
    gap: 3px;
    margin-right: 9px;
    padding-left: 3px;
    border: 1px solid #ddd;
    border-radius: 3px;
}
.color i {
    width: 22px;
    height: 13px;
    border: 1px solid #222;
    background: #d0d0d0;
}
.indent {
    margin-left: 18px;
}
.row .change {
    margin: 0 9px 0 auto;
    width: 103px;
    height: 21px;
    border: 1px solid #ddd;
    border-radius: 3px;
    background: #efefef;
    font-size: 12px;
    letter-spacing: -0.3px;
}
.options {
    height: 130px;
    padding-top: 10px;
}
.options h2 {
    margin-bottom: 2.5px;
}
.paper {
    height: 91px;
    padding-top: 10px;
}
.select {
    width: 193px;
    height: 20px;
    display: flex;
    align-items: center;
    justify-content: space-between;
    margin: 3px 0 9px;
    padding: 0 5px 0 6px;
    border: 1px solid #ccc;
    border-radius: 3px;
    background: #efefef;
    font-family: "Liberation Sans", Arial, sans-serif;
    font-size: 11.5px;
    letter-spacing: 0;
    color: #111;
}
.radios {
    display: flex;
    align-items: center;
    padding-left: 8px;
    letter-spacing: -0.2px;
}
.radios span {
    margin: 2px 9px 0 6px;
}
.radio {
    width: 12px;
    height: 12px;
    border: 1px solid #777;
    border-radius: 50%;
    background: #fff;
}
.radio.on {
    border-color: #0b6bd3;
    background: #0b6bd3;
    box-shadow: inset 0 0 0 2px #fff;
}
.actions {
    padding: 11px 9px 0 13px;
}
.actions button {
    display: block;
    width: 197px;
    height: 19px;
    margin-bottom: 1px;
    border: 1px solid #d6d6d6;
    border-radius: 3px;
    background: #efefef;
    font-size: 12px;
    letter-spacing: -0.3px;
    color: #000;
}

/* windows taskbar */
.taskbar {
    height: 37px;
    display: grid;
    grid-template-columns: 45px 45px 45px 48px 46px 46px 45px 1fr;
    padding-left: 2px;
    background: #0c060e;
    color: #fff;
}
.taskbar > div {
    display: flex;
    align-items: center;
    justify-content: center;
}
.taskbar .running {
    background: #39343d;
    border-bottom: 2px solid #7fb0e3;
}
.taskbar .tray {
    justify-content: flex-end;
    padding-right: 20px;
    fill: none;
    stroke: #eee;
}
.tray > svg {
    margin-right: 11px;
}
.tray > svg:first-child {
    margin-right: 22px;
}
.lang {
    margin: 0 14px 0 2px;
    letter-spacing: -0.3px;
}
.clock {
    width: 54px;
    margin-right: 17px;
    text-align: center;
    line-height: 16px;
    letter-spacing: -0.45px;
    margin-top: -2px;
}
.notif {
    position: relative;
}
.notif svg {
    stroke: none;
}
.notif span {
    position: absolute;
    left: 9px;
    top: 6px;
    width: 12px;
    height: 12px;
    border-radius: 50%;
    background: #333;
    border: 1px solid #999;
    font-size: 8px;
    line-height: 10px;
    text-align: center;
}

/* floating recorder bar and watermark */
.recorder {
    position: absolute;
    left: 955px;
    top: 657px;
    width: 322px;
    height: 25px;
    display: flex;
    align-items: center;
    padding-left: 7px;
    background: #1d2325;
    color: #fff;
    fill: none;
    stroke: #e8e8e8;
    overflow: hidden;
}
.recorder svg {
    margin-right: 9px;
}
.recorder span {
    width: 99px;
    margin: 0 15px 0 -1px;
    font-size: 11px;
    white-space: nowrap;
    letter-spacing: -0.3px;
}
.recorder span ~ svg {
    margin-right: 15px;
}
.recorder svg:last-child {
    margin-right: 0;
}
.watermark {
    position: absolute;
    left: 522px;
    top: 4px;
    font-family: "DejaVu Sans", sans-serif;
    font-weight: bold;
    letter-spacing: 0;
    fill: #f4f4f4;
    stroke: #101516;
    stroke-width: 2;
    paint-order: stroke;
}
```
